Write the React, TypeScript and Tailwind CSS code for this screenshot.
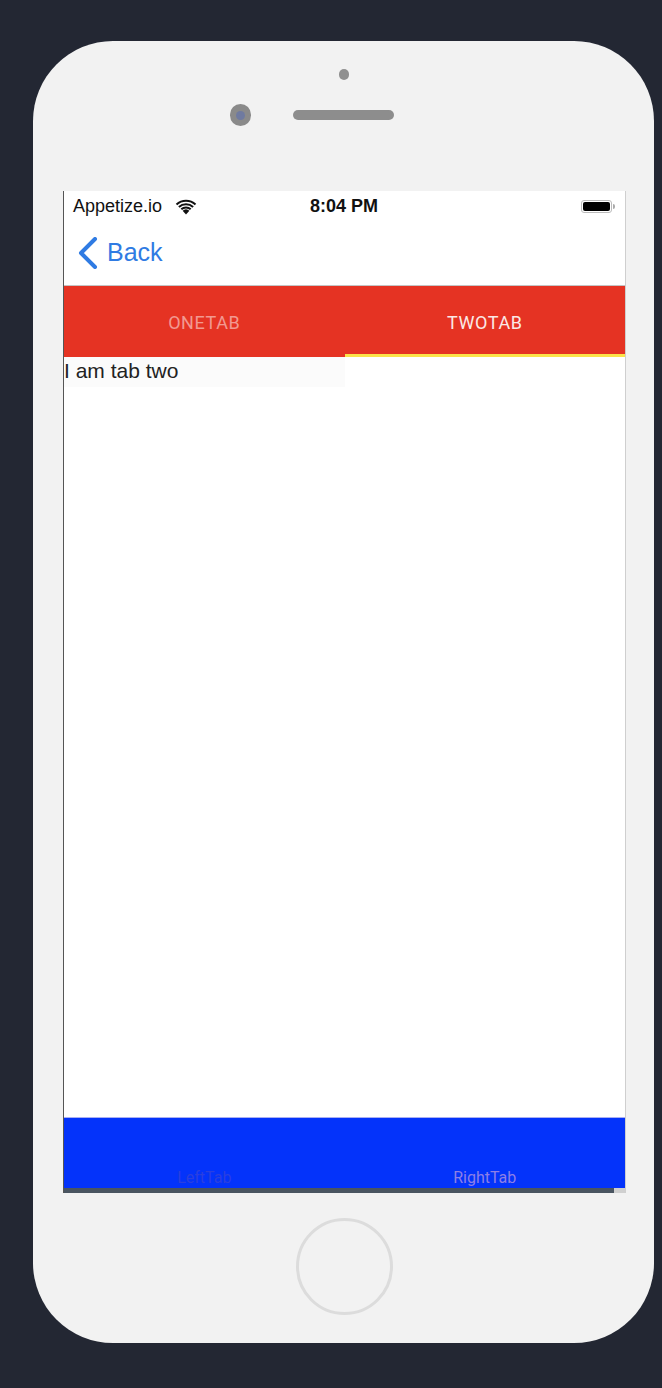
const SANS = { fontFamily: '"Liberation Sans", Arial, sans-serif' };
const ROBOTO = { fontFamily: 'Roboto, "Liberation Sans", sans-serif' };

function Wifi() {
  return (
    <svg width="22" height="16" viewBox="0 0 22 16" fill="#111">
      <path d="M11 15.5 L7.6 11.8 A5 5 0 0 1 14.4 11.8 Z" />
      <path d="M5.6 9.6 A8 8 0 0 1 16.4 9.6 L15 11.1 A6 6 0 0 0 7 11.1 Z" />
      <path d="M3.2 7.2 A11.5 11.5 0 0 1 18.8 7.2 L17.4 8.7 A9.5 9.5 0 0 0 4.6 8.7 Z" />
      <path d="M0.8 4.8 A15 15 0 0 1 21.2 4.8 L19.8 6.3 A13 13 0 0 0 2.2 6.3 Z" />
    </svg>
  );
}

function Battery() {
  return (
    <div className="flex items-center">
      <div className="h-[13px] w-[31px] rounded-[3px] border border-[#bbb] p-[1px]">
        <div className="h-full w-full rounded-[2px] bg-black" />
      </div>
      <div className="ml-[1px] h-[5px] w-[2px] rounded-r-sm bg-[#aaa]" />
    </div>
  );
}

export default function App() {
  return (
    <div className="min-h-[1388px] w-[662px] bg-[#232733] pt-[41px] pl-[33px]">
      <div className="flex h-[1302px] w-[621px] flex-col rounded-[80px] bg-[#f2f2f2]">
        {/* top hardware */}
        <div className="flex flex-col items-center pt-[28px]">
          <div className="h-[11px] w-[10px] rounded-full bg-[#909090]" />
          <div className="mt-[24px] grid w-full grid-cols-[1fr_auto_1fr] items-center">
            <div className="flex justify-end pr-[42px]">
              <div className="flex h-[22px] w-[21px] items-center justify-center rounded-full bg-[#8a8a8a]">
                <div className="h-[9px] w-[9px] rounded-full bg-[#6f7aa0]" />
              </div>
            </div>
            <div className="h-[10px] w-[101px] rounded-full bg-[#8d8d8d]" />
            <div />
          </div>
        </div>

        {/* screen */}
        <div
          className="mt-[65px] ml-[30px] flex h-[1002px] w-[563px] flex-col border-l border-r border-l-[#555] border-r-[#cfcfcf] bg-white"
          style={SANS}
        >
          <div className="flex h-[31px] items-center px-[9px] text-[18px] text-[#111]">
            <div className="flex flex-1 items-center gap-[13px]">
              <span>Appetize.io</span>
              <Wifi />
            </div>
            <span className="font-bold">8:04 PM</span>
            <div className="flex flex-1 justify-end pr-[1px]">
              <Battery />
            </div>
          </div>

          <div className="flex h-[64px] items-center border-b border-[#c4c4c4] pl-[13px] pb-[2px] text-[#2f7be3]">
            <svg width="22" height="32" viewBox="0 0 22 32" fill="none">
              <path d="M18 2 L4 16 L18 30" stroke="#2f7be3" strokeWidth="4" strokeLinecap="round" strokeLinejoin="round" />
            </svg>
            <span className="ml-[8px] text-[25px]">Back</span>
          </div>

          <div className="flex h-[71px] bg-[#e53323] text-[18px] tracking-[0.6px]" style={ROBOTO}>
            <div className="flex flex-1 items-center justify-center pt-[2px] text-white/50">ONETAB</div>
            <div className="flex flex-1 flex-col">
              <div className="flex flex-1 items-center justify-center pt-[5px] text-[#fbe9e6]">TWOTAB</div>
              <div className="h-[3px] bg-[#fbe34a]" />
            </div>
          </div>

          <div className="flex-1 bg-white">
            <div className="w-[281px] bg-[#fbfbfb] pt-[2px] pb-[4px] text-[21px] leading-[24px] text-[#222]">I am tab two</div>
          </div>

          <div className="flex h-[71px] items-end border-t border-[#aab0f2] bg-[#0433fa] pb-[2px] text-[16px] leading-[16px]" style={ROBOTO}>
            <div className="flex-1 text-center text-[#2a3fe0]">LeftTab</div>
            <div className="flex-1 text-center text-[#8d7fe6]">RightTab</div>
          </div>
          <div className="flex h-[5px]">
            <div className="flex-1 bg-[#4a5561]" />
            <div className="w-[11px] bg-[#d0d0d0]" />
          </div>
        </div>

        {/* home button */}
        <div className="mt-[25px] flex justify-center pl-[1px]">
          <div className="h-[97px] w-[97px] rounded-full border-[3px] border-[#dcdcdc]" />
        </div>
      </div>
    </div>
  );
}
